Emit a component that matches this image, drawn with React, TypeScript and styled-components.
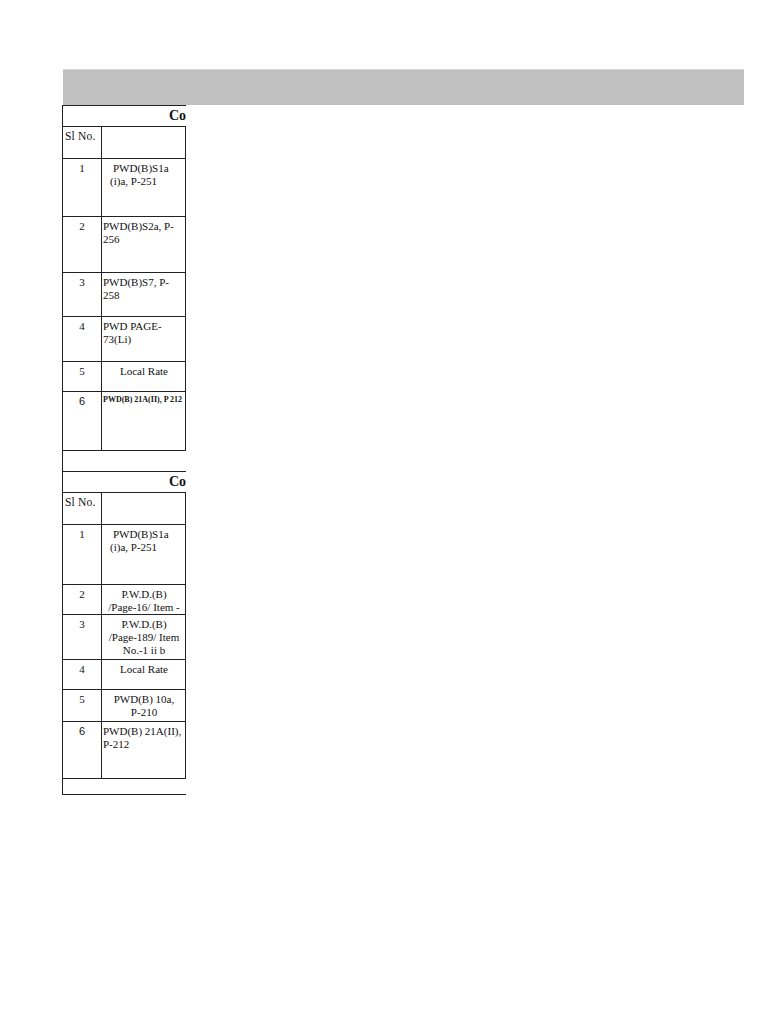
import styled, { createGlobalStyle } from "styled-components";

const GlobalStyle = createGlobalStyle`
  html, body {
    margin: 0;
    padding: 0;
    background: #ffffff;
  }
  body {
    font-family: "Liberation Serif", "Times New Roman", serif;
    color: #111111;
  }
`;

const Page = styled.div`
  padding: 69px 0 0 62px;
  width: 768px;
  height: 1024px;
  box-sizing: border-box;
`;

const Banner = styled.div`
  margin-left: 1px;
  width: 681px;
  height: 36px;
  background: #c0c0c0;
  border-top: 1px solid #d6d6d6;
  box-sizing: border-box;
`;

const Sheet = styled.div`
  width: 124px;
  overflow: hidden;
  border-left: 1px solid #222;
  box-sizing: border-box;
`;

const TitleRow = styled.div<{ $h: number; $top?: boolean }>`
  height: ${(p) => p.$h}px;
  box-sizing: border-box;
  border-top: ${(p) => (p.$top ? "1px solid #222" : "none")};
  border-bottom: 1px solid #222;
  padding: 2px 0 0 0;
  font-size: 14px;
  font-weight: 700;
  text-align: right;
  white-space: nowrap;
  line-height: 16px;
`;

const Row = styled.div<{ $h: number }>`
  display: grid;
  grid-template-columns: 39px 84px;
  height: ${(p) => p.$h}px;
  box-sizing: border-box;
  border-bottom: 1px solid #222;
`;

const Gap = styled.div<{ $h: number }>`
  height: ${(p) => p.$h}px;
  box-sizing: border-box;
  border-bottom: 1px solid #222;
`;

const NumCell = styled.div<{ $sans?: boolean; $label?: boolean }>`
  border-right: 1px solid #222;
  font-size: ${(p) => (p.$label ? "11.5px" : "11px")};
  line-height: 13px;
  padding: 3px 1px 0 ${(p) => (p.$label ? "2px" : "1px")};
  text-align: ${(p) => (p.$label ? "left" : "center")};
  font-family: ${(p) =>
    p.$sans ? '"Liberation Sans", Arial, sans-serif' : "inherit"};
  letter-spacing: ${(p) => (p.$label ? "0.2px" : "0")};
  white-space: nowrap;
`;

const TextCell = styled.div<{
  $align?: "left" | "center";
  $indent?: number;
  $tiny?: boolean;
}>`
  border-right: 1px solid #222;
  font-size: ${(p) => (p.$tiny ? "8px" : "11px")};
  font-weight: ${(p) => (p.$tiny ? 700 : 400)};
  white-space: pre;
  line-height: 13px;
  padding: ${(p) => (p.$tiny ? "1px" : "3px")} 0 0 ${(p) => p.$indent ?? 1}px;
  text-indent: ${(p) => (p.$indent ? "3px" : "0")};
  text-align: ${(p) => p.$align ?? "left"};
  overflow: hidden;
`;

type Item = {
  no: string;
  ref: string;
  h: number;
  align?: "left" | "center";
  indent?: number;
  tiny?: boolean;
  sans?: boolean;
};

type Section = {
  top: boolean;
  titleH: number;
  headH: number;
  items: Item[];
  gap: number;
};

const sections: Section[] = [
  {
    top: true,
    titleH: 22,
    headH: 32,
    gap: 21,
    items: [
      { no: "1", ref: "PWD(B)S1a\n(i)a, P-251", h: 58, indent: 8 },
      { no: "2", ref: "PWD(B)S2a, P-\n256", h: 56 },
      { no: "3", ref: "PWD(B)S7, P-\n258", h: 44 },
      { no: "4", ref: "PWD PAGE-\n73(Li)", h: 45 },
      { no: "5", ref: "Local Rate", h: 30, align: "center" },
      { no: "6", ref: "PWD(B) 21A(II), P 212", h: 59, tiny: true, sans: true },
    ],
  },
  {
    top: false,
    titleH: 21,
    headH: 32,
    gap: 16,
    items: [
      { no: "1", ref: "PWD(B)S1a\n(i)a, P-251", h: 60, indent: 8 },
      { no: "2", ref: "P.W.D.(B)\n/Page-16/ Item -", h: 30, align: "center" },
      {
        no: "3",
        ref: "P.W.D.(B)\n/Page-189/ Item\nNo.-1 ii b",
        h: 45,
        align: "center",
      },
      { no: "4", ref: "Local Rate", h: 30, align: "center" },
      { no: "5", ref: "PWD(B) 10a,\nP-210", h: 32, align: "center" },
      { no: "6", ref: "PWD(B) 21A(II),\nP-212", h: 57, sans: true },
    ],
  },
];

function App() {
  return (
    <Page>
      <GlobalStyle />
      <Banner />
      <Sheet>
        {sections.map((s, si) => (
          <div key={si}>
            <TitleRow $h={s.titleH} $top={s.top}>
              Co
            </TitleRow>
            <Row $h={s.headH}>
              <NumCell $label>Sl No.</NumCell>
              <TextCell />
            </Row>
            {s.items.map((it) => (
              <Row key={it.no} $h={it.h}>
                <NumCell $sans={it.sans}>{it.no}</NumCell>
                <TextCell $align={it.align} $indent={it.indent} $tiny={it.tiny}>
                  {it.ref}
                </TextCell>
              </Row>
            ))}
            <Gap $h={s.gap} />
          </div>
        ))}
      </Sheet>
    </Page>
  );
}

export default App;
